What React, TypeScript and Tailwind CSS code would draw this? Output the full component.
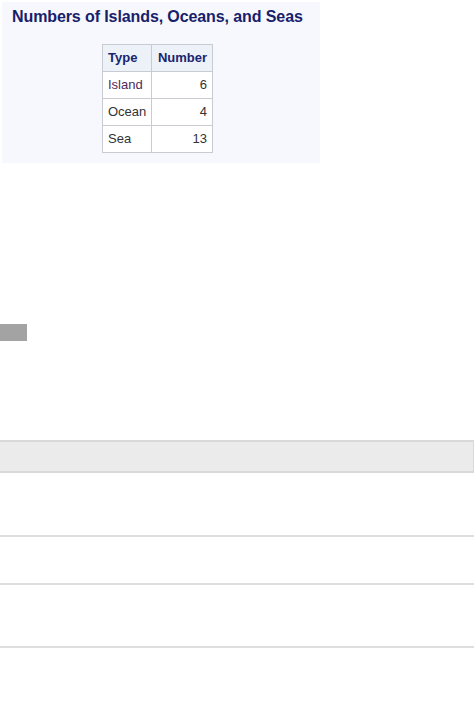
import React from 'react';

const App: React.FC = () => {
  const rows = [
    { type: 'Island', count: 6, color: 'text-[#4f2a5c]' },
    { type: 'Ocean', count: 4, color: 'text-[#333333]' },
    { type: 'Sea', count: 13, color: 'text-[#333333]' },
  ];

  return (
    <div className="w-[474px] h-[710px] bg-white font-['Liberation_Sans',Arial,sans-serif] overflow-hidden">
      <div className="pt-[2px] pl-[2px]">
        <div className="w-[318px] h-[161px] bg-[#f7f8fd] flex flex-col">
          <h1 className="mt-[5px] ml-[10px] text-[16px] leading-[20px] font-bold text-[#17216a] tracking-[-0.1px]">
            Numbers of Islands, Oceans, and Seas
          </h1>
          <table className="mt-[17px] ml-[100px] w-[111px] border-collapse text-[13px] bg-white">
            <thead>
              <tr className="h-[27px] bg-[#edf2f9]">
                <th className="border border-[#c8ccd2] px-[5px] text-left font-bold text-[#1a2470] w-[49px]">Type</th>
                <th className="border border-[#c8ccd2] px-[5px] text-right font-bold text-[#1a2470]">Number</th>
              </tr>
            </thead>
            <tbody>
              {rows.map((r) => (
                <tr key={r.type} className="h-[27px]">
                  <td className={`border border-[#c8ccd2] px-[5px] text-left ${r.color}`}>{r.type}</td>
                  <td className="border border-[#c8ccd2] px-[5px] text-right text-[#333333]">{r.count}</td>
                </tr>
              ))}
            </tbody>
          </table>
        </div>
      </div>

      <div className="mt-[161px] w-[27px] h-[17px] bg-[#a3a3a3]" />

      <div className="mt-[99px] w-[474px]">
        <div className="h-[33px] bg-[#ebebeb] border-t-2 border-b-2 border-r border-[#d9d9d9]" />
        <div className="h-[64px] border-b-2 border-[#dedede]" />
        <div className="h-[48px] border-b-2 border-[#dedede]" />
        <div className="h-[63px] border-b-2 border-[#dedede]" />
      </div>
    </div>
  );
};

export default App;
